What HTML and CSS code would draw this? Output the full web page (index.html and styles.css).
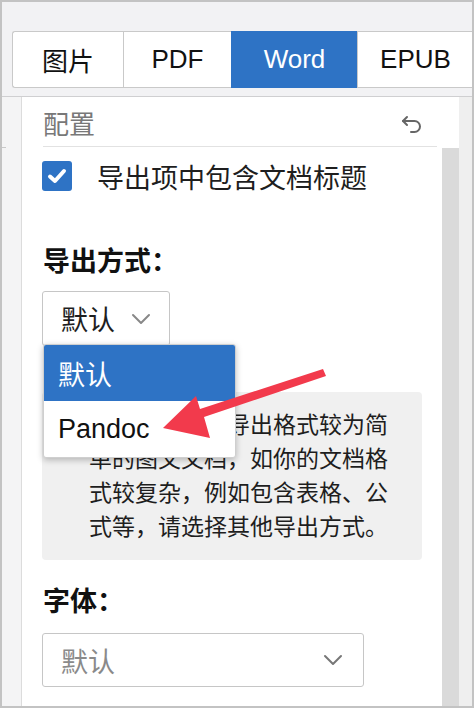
FILE: index.html
```html
<!DOCTYPE html>
<html lang="zh-CN">
<head>
<meta charset="utf-8">
<link rel="stylesheet" href="styles.css">
</head>
<body>
<div class="frame">
  <div class="top">
    <div class="tabs">
      <div class="tab tab-first">图片</div>
      <div class="tab">PDF</div>
      <div class="tab tab-active">Word</div>
      <div class="tab tab-last">EPUB</div>
    </div>
  </div>
  <div class="body">
    <div class="left-strip"><span class="dash"></span></div>
    <div class="main">
      <div class="header">
        <span class="header-title">配置</span>
        <svg class="undo" width="22" height="20" viewBox="0 0 22 20" fill="none" stroke="#666" stroke-width="2" stroke-linecap="round" stroke-linejoin="round">
          <path d="M6 2 L2 6 L6 10"/>
          <path d="M2 6 H13.5 a5.5 5.5 0 0 1 0 11 H10"/>
        </svg>
      </div>
      <div class="content-row">
        <div class="content">
          <label class="check-row">
            <span class="checkbox">
              <svg width="20" height="16" viewBox="0 0 20 16" fill="none" stroke="#fff" stroke-width="4" stroke-linecap="round" stroke-linejoin="round"><path d="M3 8.5 L8 13 L17 3"/></svg>
            </span>
            <span class="check-label">导出项中包含文档标题</span>
          </label>
          <div class="field-label first-label">导出方式：</div>
          <div class="select-wrap">
            <div class="select select-small">
              <span>默认</span>
              <svg class="chev" width="20" height="12" viewBox="0 0 20 12" fill="none" stroke="#888" stroke-width="2" stroke-linecap="round" stroke-linejoin="round"><path d="M2 2 L10 10 L18 2"/></svg>
            </div>
            <div class="menu">
              <div class="menu-item menu-item-active">默认</div>
              <div class="menu-item">Pandoc</div>
            </div>
          </div>
          <div class="info">默认方式适合导出格式较为简单的图文文档，如你的文档格式较复杂，例如包含表格、公式等，请选择其他导出方式。</div>
          <div class="field-label font-label">字体：</div>
          <div class="select select-wide">
            <span class="muted">默认</span>
            <svg class="chev" width="20" height="12" viewBox="0 0 20 12" fill="none" stroke="#777" stroke-width="2" stroke-linecap="round" stroke-linejoin="round"><path d="M2 2 L10 10 L18 2"/></svg>
          </div>
        </div>
        <div class="scrollbar"></div>
      </div>
    </div>
    <div class="right-strip"></div>
  </div>
  <svg class="arrow" width="474" height="708" viewBox="0 0 474 708">
    <polygon fill="#f23a4c" points="163,428 196,396 200,409 323,369 326,376 204,417 210,438"/>
  </svg>
</div>
</body>
</html>
```

FILE: styles.css
```css
* { box-sizing: border-box; }
html, body {
  margin: 0;
  padding: 0;
  width: 474px;
  height: 708px;
  overflow: hidden;
  background: #fff;
}
body {
  font-family: "Liberation Sans", "Noto Sans CJK SC", sans-serif;
  color: #1e1e1e;
}
.frame {
  position: relative;
  width: 474px;
  height: 708px;
  border: 2px solid #c3c3c3;
  display: flex;
  flex-direction: column;
  overflow: hidden;
}
.top {
  height: 95px;
  flex: none;
  background: #f2f2f4;
  border-bottom: 1px solid #cfcfd1;
  padding: 29px 0 0 10px;
  overflow: hidden;
}
.tabs {
  display: flex;
  height: 57px;
  width: 480px;
}
.tab {
  height: 57px;
  display: flex;
  align-items: center;
  justify-content: center;
  font-size: 26px;
  background: #fff;
  border-top: 1px solid #c9c9c9;
  border-bottom: 1px solid #c9c9c9;
  border-left: 1px solid #c9c9c9;
  color: #111;
}
.tab-first { width: 111px; border-radius: 3px 0 0 3px; }
.tab:nth-child(2) { width: 108px; }
.tab-active {
  width: 126px;
  background: #2e73c5;
  border-color: #2e73c5;
  color: #fff;
}
.tab-last { width: 130px; padding-right: 14px; }
.body {
  flex: 1;
  display: flex;
  min-height: 0;
}
.left-strip {
  width: 20px;
  flex: none;
  background: #f4f4f5;
  border-right: 1px solid #dcdcdc;
  position: relative;
}
.dash {
  position: absolute;
  left: 0;
  top: 50px;
  width: 4px;
  height: 1px;
  background: #c8c8c8;
}
.main {
  width: 437px;
  flex: none;
  display: flex;
  flex-direction: column;
  background: #fff;
}
.header {
  height: 50px;
  flex: none;
  margin: 0 22px 0 21px;
  border-bottom: 1px solid #e2e2e2;
  display: flex;
  align-items: center;
  justify-content: space-between;
  padding-top: 2px;
}
.header-title {
  font-size: 26px;
  color: #787878;
}
.undo { margin-right: 14px; margin-top: 4px; }
.content-row {
  flex: 1;
  display: flex;
  min-height: 0;
}
.content {
  flex: 1;
  padding: 14px 0 0 20px;
}
.scrollbar {
  width: 17px;
  flex: none;
  background: #dadada;
  margin-top: 1px;
}
.right-strip {
  flex: 1;
  background: #efefef;
}
.check-row {
  display: flex;
  align-items: center;
  height: 30px;
}
.checkbox {
  width: 30px;
  height: 30px;
  border-radius: 3px;
  background: #2e73c5;
  display: flex;
  align-items: center;
  justify-content: center;
}
.check-label {
  margin-left: 25px;
  font-size: 27px;
  color: #1e1e1e;
}
.field-label {
  font-size: 27px;
  font-weight: bold;
  line-height: 36px;
  color: #111;
}
.first-label { margin-top: 53px; margin-left: 1px; }
.font-label { margin-top: 24px; margin-left: 1px; }
.select-wrap {
  position: relative;
  margin-top: 11px;
}
.select {
  display: flex;
  align-items: center;
  justify-content: space-between;
  border: 1px solid #c6c6c6;
  border-radius: 3px;
  background: #fff;
  font-size: 27px;
  padding-left: 18px;
}
.select-small {
  width: 128px;
  height: 55px;
  padding-right: 18px;
}
.select-wide {
  width: 322px;
  height: 54px;
  margin-top: 13px;
  padding-right: 20px;
}
.muted { color: #8a8a8a; }
.menu {
  position: absolute;
  left: 1px;
  top: 53px;
  width: 193px;
  background: #fff;
  border: 1px solid #cfcfcf;
  border-radius: 3px;
  box-shadow: 0 2px 6px rgba(0, 0, 0, 0.25);
  z-index: 2;
  overflow: hidden;
}
.menu-item {
  height: 56px;
  display: flex;
  align-items: center;
  padding-left: 14px;
  font-size: 27px;
  color: #111;
}
.menu-item-active {
  background: #2e73c5;
  color: #fff;
}
.info {
  margin-top: 46px;
  width: 380px;
  height: 168px;
  background: #f0f0f0;
  border-radius: 4px;
  padding: 16px 30px 0 47px;
  font-size: 23px;
  line-height: 34px;
  color: #1e1e1e;
  word-break: break-all;
}
.arrow {
  position: absolute;
  left: -2px;
  top: -2px;
  z-index: 5;
  pointer-events: none;
}
```
